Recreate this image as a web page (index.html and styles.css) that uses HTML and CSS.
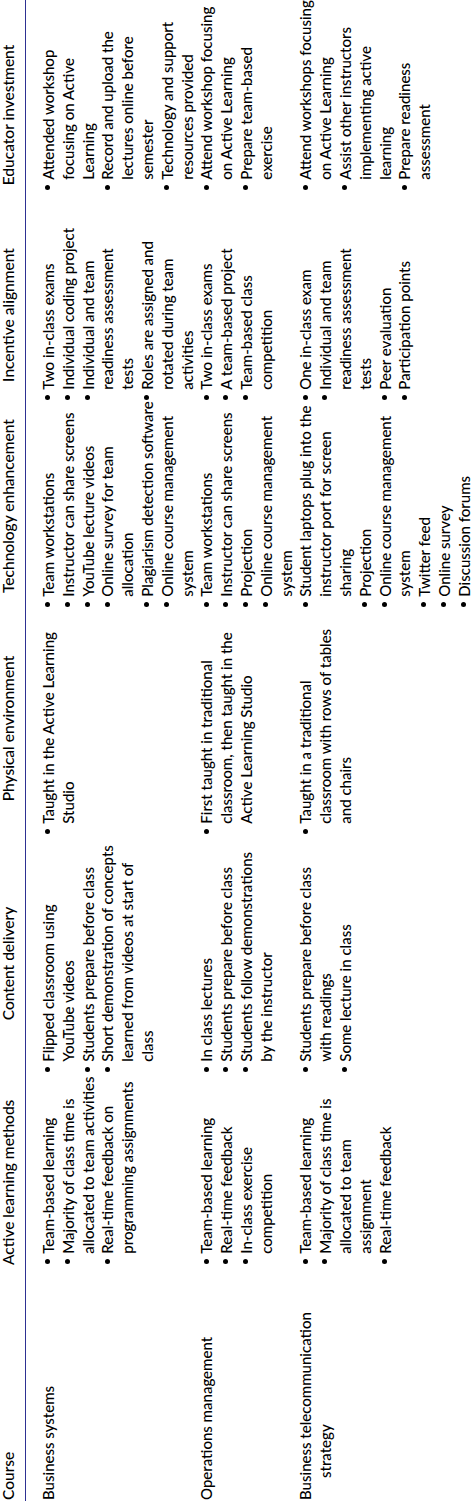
FILE: index.html
```html
<!DOCTYPE html>
<html lang="en">
<head>
<meta charset="utf-8">
<title>Active learning courses</title>
<link rel="stylesheet" href="styles.css">
</head>
<body>
<div class="page">
  <table class="tbl">
    <colgroup>
      <col class="c-course">
      <col class="c-active">
      <col class="c-content">
      <col class="c-phys">
      <col class="c-tech">
      <col class="c-inc">
      <col class="c-edu">
    </colgroup>
    <thead>
      <tr>
        <th class="h-course">Course</th>
        <th class="h-active">Active learning methods</th>
        <th class="h-content">Content delivery</th>
        <th class="h-phys">Physical environment</th>
        <th class="h-tech">Technology enhancement</th>
        <th class="h-inc">Incentive alignment</th>
        <th class="h-edu">Educator investment</th>
      </tr>
    </thead>
    <tbody>
      <tr class="first">
        <td class="course">Business systems</td>
        <td><ul class="bl">
          <li><span class="dot"></span><span class="tx">Team-based learning</span></li>
          <li><span class="dot"></span><span class="tx">Majority of class time is<br>allocated to team activities</span></li>
          <li><span class="dot"></span><span class="tx">Real-time feedback on<br>programming assignments</span></li>
        </ul></td>
        <td><ul class="bl">
          <li><span class="dot"></span><span class="tx">Flipped classroom using<br>YouTube videos</span></li>
          <li><span class="dot"></span><span class="tx">Students prepare before class</span></li>
          <li><span class="dot"></span><span class="tx">Short demonstration of concepts<br>learned from videos at start of<br>class</span></li>
        </ul></td>
        <td><ul class="bl">
          <li><span class="dot"></span><span class="tx">Taught in the Active Learning<br>Studio</span></li>
        </ul></td>
        <td><ul class="bl">
          <li><span class="dot"></span><span class="tx">Team workstations</span></li>
          <li><span class="dot"></span><span class="tx">Instructor can share screens</span></li>
          <li><span class="dot"></span><span class="tx">YouTube lecture videos</span></li>
          <li><span class="dot"></span><span class="tx">Online survey for team<br>allocation</span></li>
          <li><span class="dot"></span><span class="tx">Plagiarism detection software</span></li>
          <li><span class="dot"></span><span class="tx">Online course management<br>system</span></li>
        </ul></td>
        <td><ul class="bl">
          <li><span class="dot"></span><span class="tx">Two in-class exams</span></li>
          <li><span class="dot"></span><span class="tx">Individual coding project</span></li>
          <li><span class="dot"></span><span class="tx">Individual and team<br>readiness assessment<br>tests</span></li>
          <li><span class="dot"></span><span class="tx">Roles are assigned and<br>rotated during team<br>activities</span></li>
        </ul></td>
        <td><ul class="bl">
          <li><span class="dot"></span><span class="tx">Attended workshop<br>focusing on Active<br>Learning</span></li>
          <li><span class="dot"></span><span class="tx">Record and upload the<br>lectures online before<br>semester</span></li>
          <li><span class="dot"></span><span class="tx">Technology and support<br>resources provided</span></li>
        </ul></td>
      </tr>
      <tr>
        <td class="course">Operations management</td>
        <td><ul class="bl">
          <li><span class="dot"></span><span class="tx">Team-based learning</span></li>
          <li><span class="dot"></span><span class="tx">Real-time feedback</span></li>
          <li><span class="dot"></span><span class="tx">In-class exercise<br>competition</span></li>
        </ul></td>
        <td><ul class="bl">
          <li><span class="dot"></span><span class="tx">In class lectures</span></li>
          <li><span class="dot"></span><span class="tx">Students prepare before class</span></li>
          <li><span class="dot"></span><span class="tx">Students follow demonstrations<br>by the instructor</span></li>
        </ul></td>
        <td><ul class="bl">
          <li><span class="dot"></span><span class="tx">First taught in traditional<br>classroom, then taught in the<br>Active Learning Studio</span></li>
        </ul></td>
        <td><ul class="bl">
          <li><span class="dot"></span><span class="tx">Team workstations</span></li>
          <li><span class="dot"></span><span class="tx">Instructor can share screens</span></li>
          <li><span class="dot"></span><span class="tx">Projection</span></li>
          <li><span class="dot"></span><span class="tx">Online course management<br>system</span></li>
        </ul></td>
        <td><ul class="bl">
          <li><span class="dot"></span><span class="tx">Two in-class exams</span></li>
          <li><span class="dot"></span><span class="tx">A team-based project</span></li>
          <li><span class="dot"></span><span class="tx">Team-based class<br>competition</span></li>
        </ul></td>
        <td><ul class="bl">
          <li><span class="dot"></span><span class="tx">Attend workshop focusing<br>on Active Learning</span></li>
          <li><span class="dot"></span><span class="tx">Prepare team-based<br>exercise</span></li>
        </ul></td>
      </tr>
      <tr>
        <td class="course">Business telecommunication strategy</td>
        <td><ul class="bl">
          <li><span class="dot"></span><span class="tx">Team-based learning</span></li>
          <li><span class="dot"></span><span class="tx">Majority of class time is<br>allocated to team<br>assignment</span></li>
          <li><span class="dot"></span><span class="tx">Real-time feedback</span></li>
        </ul></td>
        <td><ul class="bl">
          <li><span class="dot"></span><span class="tx">Students prepare before class<br>with readings</span></li>
          <li><span class="dot"></span><span class="tx">Some lecture in class</span></li>
        </ul></td>
        <td><ul class="bl">
          <li><span class="dot"></span><span class="tx">Taught in a traditional<br>classroom with rows of tables<br>and chairs</span></li>
        </ul></td>
        <td><ul class="bl">
          <li><span class="dot"></span><span class="tx">Student laptops plug into the<br>instructor port for screen<br>sharing</span></li>
          <li><span class="dot"></span><span class="tx">Projection</span></li>
          <li><span class="dot"></span><span class="tx">Online course management<br>system</span></li>
          <li><span class="dot"></span><span class="tx">Twitter feed</span></li>
          <li><span class="dot"></span><span class="tx">Online survey</span></li>
          <li><span class="dot"></span><span class="tx">Discussion forums</span></li>
        </ul></td>
        <td><ul class="bl">
          <li><span class="dot"></span><span class="tx">One in-class exam</span></li>
          <li><span class="dot"></span><span class="tx">Individual and team<br>readiness assessment<br>tests</span></li>
          <li><span class="dot"></span><span class="tx">Peer evaluation</span></li>
          <li><span class="dot"></span><span class="tx">Participation points</span></li>
        </ul></td>
        <td><ul class="bl">
          <li><span class="dot"></span><span class="tx">Attend workshops focusing<br>on Active Learning</span></li>
          <li><span class="dot"></span><span class="tx">Assist other instructors<br>implementing active<br>learning</span></li>
          <li><span class="dot"></span><span class="tx">Prepare readiness<br>assessment</span></li>
        </ul></td>
      </tr>
    </tbody>
  </table>
</div>
</body>
</html>
```

FILE: styles.css
```css
html, body {
  margin: 0;
  padding: 0;
  background: #ffffff;
}

.page {
  width: 474px;
  height: 1501px;
  overflow: hidden;
  background: #ffffff;
}

.tbl {
  width: 1501px;
  table-layout: fixed;
  border-collapse: collapse;
  border-spacing: 0;
  transform-origin: 0 0;
  transform: rotate(-90deg) translateX(-100%);
  font-family: Lato, "Liberation Sans", sans-serif;
  font-weight: 500;
  color: #000000;
}

.c-course { width: 236px; }
.c-active { width: 192px; }
.c-content { width: 238px; }
.c-phys { width: 227px; }
.c-tech { width: 207px; }
.c-inc { width: 210px; }
.c-edu { width: 191px; }

.tbl th {
  font-weight: 500;
  font-size: 15.5px;
  line-height: 14.6px;
  text-align: center;
  vertical-align: top;
  white-space: nowrap;
  padding: 1.2px 0 9.2px 0;
  border-bottom: 1.5px solid #2e3192;
  height: 14.6px;
}

.tbl th.h-course {
  text-align: left;
  padding-left: 1px;
}

.tbl th.h-active { padding-right: 31px; }
.tbl th.h-content { padding-right: 19px; }
.tbl th.h-phys { padding-right: 14px; }
.tbl th.h-tech { padding-right: 3px; }
.tbl th.h-inc { padding-right: 38px; }
.tbl th.h-edu { padding-right: 39px; }

.tbl td {
  font-size: 15px;
  line-height: 19.8px;
  vertical-align: top;
  padding: 0;
}

.tbl tr.first td {
  padding-top: 13px;
}

.tbl td.course {
  padding-left: 23px;
  text-indent: -22px;
}

.bl {
  list-style: none;
  margin: 0;
  padding: 0;
}

.bl li {
  display: flex;
  align-items: flex-start;
  white-space: nowrap;
}

.dot {
  flex: none;
  width: 5px;
  height: 5px;
  border-radius: 50%;
  background: #000000;
  margin: 6.3px 5.8px 0 0.5px;
}

.tx {
  display: block;
}
```
